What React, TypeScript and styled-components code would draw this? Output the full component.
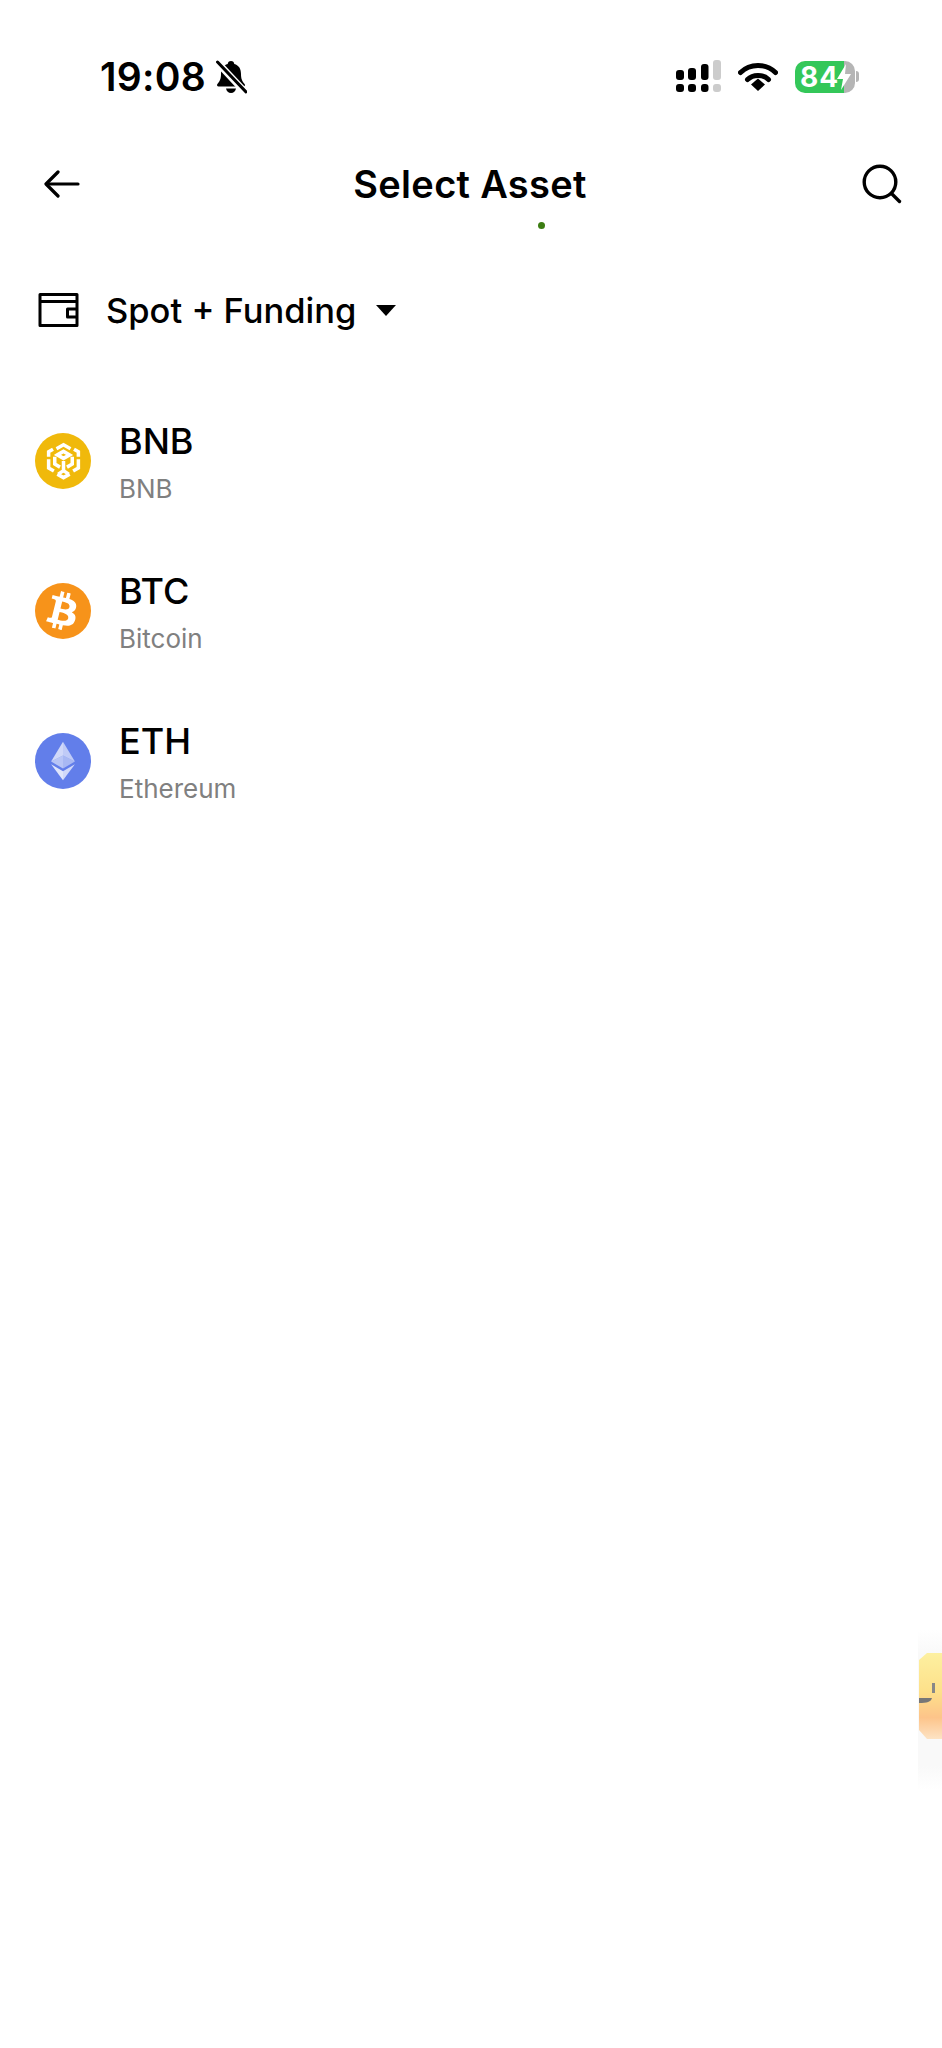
import React from "react";
import styled, { createGlobalStyle } from "styled-components";
import { FaBtc } from "react-icons/fa";

const GlobalStyle = createGlobalStyle`
  html, body {
    margin: 0;
    padding: 0;
    background: #fff;
  }
`;

const Screen = styled.div`
  position: relative;
  width: 942px;
  height: 2048px;
  overflow: hidden;
  background: #fff;
  color: #000;
  font-family: "Inter", "Liberation Sans", sans-serif;
`;

const StatusBar = styled.div`
  display: flex;
  align-items: center;
  justify-content: space-between;
  height: 33px;
  padding: 60px 83px 0 100px;
`;

const StatusGroup = styled.div`
  display: flex;
  align-items: center;
  gap: ${(props: { $gap: number }) => props.$gap}px;
`;

const Clock = styled.span`
  font-size: 39px;
  line-height: 33px;
  font-weight: 600;
  letter-spacing: 0.3px;
`;

const Battery = styled.div`
  display: flex;
  align-items: center;
`;

const BatteryBody = styled.div`
  display: flex;
  width: 60px;
  height: 32px;
  border-radius: 10px;
  overflow: hidden;
`;

const BatteryFill = styled.div`
  width: 49px;
  padding-left: 5px;
  background: #34c759;
  color: #fff;
  font-size: 28px;
  line-height: 32px;
  font-weight: 700;
  letter-spacing: 1px;
  box-sizing: border-box;
`;

const BatteryRest = styled.div`
  flex: 1;
  background: #b5b5b5;
`;

const BatteryCap = styled.div`
  width: 3px;
  height: 11px;
  margin-left: 1px;
  border-radius: 0 3px 3px 0;
  background: #b5b5b5;
`;

const Bolt = styled.svg`
  position: absolute;
  left: 836px;
  top: 64px;
`;

const Nav = styled.div`
  display: grid;
  grid-template-columns: 1fr auto 1fr;
  align-items: center;
  height: 90px;
  margin-top: 46px;
  padding: 0 40px 0 38px;
`;

const BackButton = styled.div`
  display: flex;
  padding-left: 6px;
`;

const Title = styled.h1`
  margin: 0;
  font-size: 38px;
  font-weight: 600;
  letter-spacing: 0.3px;
`;

const NavEnd = styled.div`
  display: flex;
  justify-content: flex-end;
`;

const Dot = styled.div`
  position: absolute;
  left: 538px;
  top: 222px;
  width: 7px;
  height: 7px;
  border-radius: 50%;
  background: #3c7d12;
`;

const Filter = styled.div`
  display: flex;
  align-items: center;
  height: 60px;
  margin-top: 51px;
  padding-left: 38px;
`;

const FilterLabel = styled.span`
  margin-left: 27px;
  font-size: 34.5px;
  font-weight: 500;
`;

const Caret = styled.div`
  width: 0;
  height: 0;
  margin-left: 20px;
  border-left: 10px solid transparent;
  border-right: 10px solid transparent;
  border-top: 11px solid #000;
`;

const AssetList = styled.div`
  margin-top: 46px;
`;

const AssetRow = styled.div`
  display: flex;
  align-items: center;
  gap: 28px;
  height: 150px;
  padding-left: 35px;
`;

const AssetText = styled.div`
  display: flex;
  flex-direction: column;
  gap: 15px;
  padding-top: 5px;
`;

const AssetName = styled.span`
  font-size: 36px;
  line-height: 36px;
  font-weight: 500;
`;

const AssetFull = styled.span`
  font-size: 26px;
  line-height: 30px;
  color: #808080;
`;

const CoinBadge = styled.div<{ $bg: string }>`
  display: flex;
  align-items: center;
  justify-content: center;
  width: 56px;
  height: 56px;
  border-radius: 50%;
  color: #fff;
  background: ${(props) => props.$bg};
`;

const TiltedBtc = styled(FaBtc)`
  transform: rotate(14deg);
`;

const FloatShade = styled.div`
  position: absolute;
  right: 0;
  top: 1630px;
  width: 24px;
  height: 160px;
  background: linear-gradient(#fff, #f9f9f9 15%, #f9f9f9 85%, #fff);
`;

const FloatWidget = styled.svg`
  position: absolute;
  right: 0;
  top: 1652px;
`;

const SignalIcon = () => (
  <svg width="46" height="33" viewBox="0 0 46 33">
    <rect x="1" y="10" width="8" height="10" rx="3" fill="#000" />
    <rect x="13" y="8" width="8" height="12" rx="3" fill="#000" />
    <rect x="26" y="4" width="7.5" height="16" rx="3" fill="#000" />
    <rect x="38" y="0" width="8" height="20" rx="3" fill="#ccc" />
    <rect x="1" y="24" width="8" height="8" rx="3" fill="#000" />
    <rect x="13" y="24" width="8" height="8" rx="3" fill="#000" />
    <rect x="26" y="24" width="7.5" height="8" rx="3" fill="#000" />
    <rect x="38" y="24" width="8" height="8" rx="3" fill="#ccc" />
  </svg>
);

const WifiIcon = () => (
  <svg width="40" height="30" viewBox="0 0 40 30" fill="none">
    <path d="M2.500 10.500C12 1 28 1 37.500 10.500" stroke="#000" strokeWidth="5" strokeLinecap="round" />
    <path d="M9.500 17.500C15 12 25 12 30.500 17.500" stroke="#000" strokeWidth="5" strokeLinecap="round" />
    <path d="M13 22.500L20 16.500L27 22.500L20 29Z" fill="#000" />
  </svg>
);

const BellOffIcon = () => (
  <svg width="32" height="34" viewBox="0 0 32 34">
    <path
      d="M16 1c2 0 3 1.300 3.300 3 4.700 1.300 6.700 5 6.700 10 0 5 1.300 7.300 3.600 10 .8 1 .2 2.500-1.200 2.500H3.600C2.200 26.500 1.600 25 2.400 24 4.700 21.300 6 19 6 14c0-5 2-8.700 6.700-10C13 2.300 14 1 16 1Z"
      fill="#000"
    />
    <path d="M11 28.500h10c-.4 2.700-2.400 4.500-5 4.500s-4.600-1.800-5-4.500Z" fill="#000" />
    <path d="M1 1L31 33" stroke="#fff" strokeWidth="7" />
    <path d="M2.500 2L31 32" stroke="#000" strokeWidth="3" strokeLinecap="round" />
  </svg>
);

const BackIcon = () => (
  <svg width="36" height="28" viewBox="0 0 36 28" fill="none" stroke="#000" strokeWidth="3.200" strokeLinecap="round" strokeLinejoin="round">
    <path d="M34 14H3" />
    <path d="M14 2L2 14L14 26" />
  </svg>
);

const SearchIcon = () => (
  <svg width="40" height="40" viewBox="0 0 40 40" fill="none" stroke="#000" strokeWidth="3.400" strokeLinecap="round">
    <circle cx="18" cy="18" r="15.800" />
    <path d="M29.500 29.500L37.500 37.500" />
  </svg>
);

const WalletIcon = () => (
  <svg width="41" height="36" viewBox="0 0 41 36" fill="none" stroke="#000" strokeWidth="3" strokeLinejoin="round">
    <path d="M2 2.500H39V33.500H2Z" />
    <path d="M2 9.500H39" />
    <path d="M39 17H29.500V25H39" />
  </svg>
);

const BnbMark = () => (
  <svg width="35" height="38" viewBox="0 0 40 42" fill="none" stroke="#fff" strokeWidth="4">
    <path d="M12 7L20 2.500L28 7" />
    <path d="M13 14L20 10L27 14L20 18Z" />
    <path d="M3 16V10.500L8 7.500" />
    <path d="M37 16V10.500L32 7.500" />
    <path d="M3 19V29L9 32.500" />
    <path d="M37 19V29L31 32.500" />
    <path d="M10 16V24.500L16 28" />
    <path d="M30 16V24.500L24 28" />
    <path d="M20 21V32L14 36" />
    <path d="M20 32L26 36" />
    <path d="M13 36L20 40L27 36" />
  </svg>
);

const EthMark = () => (
  <svg width="56" height="56" viewBox="0 0 32 32">
    <path d="M16 5V12.800L22.800 16.300Z" fill="#fff" fillOpacity="0.6" />
    <path d="M16 5L9.200 16.300L16 12.800Z" fill="#fff" fillOpacity="0.7" />
    <path d="M16 21.800V27L22.800 17.800Z" fill="#fff" fillOpacity="0.7" />
    <path d="M16 27V21.800L9.200 17.800Z" fill="#fff" fillOpacity="0.8" />
    <path d="M16 20.300L22.800 16.300L16 12.800Z" fill="#fff" fillOpacity="0.45" />
    <path d="M9.200 16.300L16 20.300V12.800Z" fill="#fff" fillOpacity="0.55" />
  </svg>
);

const assets = [
  { symbol: "BNB", name: "BNB", color: "#f0b90b", mark: <BnbMark /> },
  { symbol: "BTC", name: "Bitcoin", color: "#f7931a", mark: <TiltedBtc size={38} /> },
  { symbol: "ETH", name: "Ethereum", color: "#627eea", mark: <EthMark /> },
];

export default function App() {
  return (
    <>
      <GlobalStyle />
      <Screen>
        <StatusBar>
          <StatusGroup $gap={9}>
            <Clock>19:08</Clock>
            <BellOffIcon />
          </StatusGroup>
          <StatusGroup $gap={17}>
            <SignalIcon />
            <WifiIcon />
            <Battery>
              <BatteryBody>
                <BatteryFill>84</BatteryFill>
                <BatteryRest />
              </BatteryBody>
              <BatteryCap />
            </Battery>
          </StatusGroup>
        </StatusBar>
        <Bolt width="16" height="26" viewBox="0 0 16 26">
          <path d="M10 0L1 15H7L5 26L15 10H9Z" fill="#fff" />
        </Bolt>

        <Nav>
          <BackButton>
            <BackIcon />
          </BackButton>
          <Title>Select Asset</Title>
          <NavEnd>
            <SearchIcon />
          </NavEnd>
        </Nav>
        <Dot />

        <Filter>
          <WalletIcon />
          <FilterLabel>Spot + Funding</FilterLabel>
          <Caret />
        </Filter>

        <AssetList>
          {assets.map((asset) => (
            <AssetRow key={asset.symbol}>
              <CoinBadge $bg={asset.color}>{asset.mark}</CoinBadge>
              <AssetText>
                <AssetName>{asset.symbol}</AssetName>
                <AssetFull>{asset.name}</AssetFull>
              </AssetText>
            </AssetRow>
          ))}
        </AssetList>

        <FloatShade />
        <FloatWidget width="23" height="88" viewBox="0 0 23 88">
          <defs>
            <linearGradient id="floatFill" x1="0" y1="0" x2="0" y2="1">
              <stop offset="0" stopColor="#fdf0a0" />
              <stop offset="0.45" stopColor="#fde08a" />
              <stop offset="0.75" stopColor="#fdc48a" />
              <stop offset="1" stopColor="#fde3c4" />
            </linearGradient>
          </defs>
          <path d="M0 8L8 1H23V87H8L0 78Z" fill="url(#floatFill)" />
          <rect x="13" y="31" width="3" height="10" fill="#888" />
          <path d="M0 46H13C12 50 8 51 0 51Z" fill="#777" />
        </FloatWidget>
      </Screen>
    </>
  );
}
